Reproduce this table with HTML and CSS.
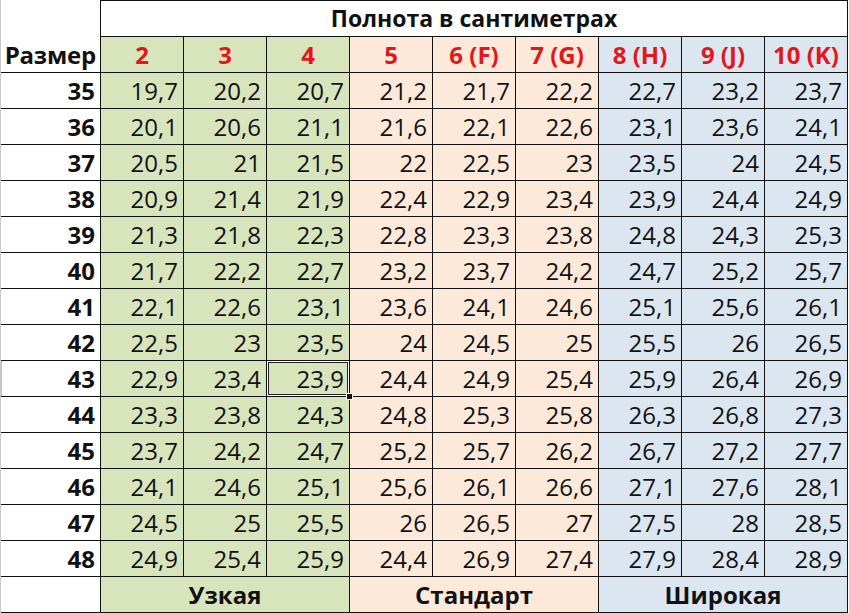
FILE: index.html
```html
<!DOCTYPE html>
<html lang="ru">
<head>
<meta charset="utf-8">
<title>Полнота в сантиметрах</title>
<link rel="stylesheet" href="styles.css">
</head>
<body>
<div class="sheet">
  <div class="c lbl corner">Размер</div>
  <div class="c title">Полнота в сантиметрах</div>

  <div class="c h g">2</div><div class="c h g">3</div><div class="c h g">4</div>
  <div class="c h p">5</div><div class="c h p">6 (F)</div><div class="c h p">7 (G)</div>
  <div class="c h b">8 (H)</div><div class="c h b">9 (J)</div><div class="c h b">10 (K)</div>

  <div class="c lbl">35</div>
  <div class="c n g">19,7</div><div class="c n g">20,2</div><div class="c n g">20,7</div>
  <div class="c n p">21,2</div><div class="c n p">21,7</div><div class="c n p">22,2</div>
  <div class="c n b">22,7</div><div class="c n b">23,2</div><div class="c n b">23,7</div>

  <div class="c lbl">36</div>
  <div class="c n g">20,1</div><div class="c n g">20,6</div><div class="c n g">21,1</div>
  <div class="c n p">21,6</div><div class="c n p">22,1</div><div class="c n p">22,6</div>
  <div class="c n b">23,1</div><div class="c n b">23,6</div><div class="c n b">24,1</div>

  <div class="c lbl">37</div>
  <div class="c n g">20,5</div><div class="c n g">21</div><div class="c n g">21,5</div>
  <div class="c n p">22</div><div class="c n p">22,5</div><div class="c n p">23</div>
  <div class="c n b">23,5</div><div class="c n b">24</div><div class="c n b">24,5</div>

  <div class="c lbl">38</div>
  <div class="c n g">20,9</div><div class="c n g">21,4</div><div class="c n g">21,9</div>
  <div class="c n p">22,4</div><div class="c n p">22,9</div><div class="c n p">23,4</div>
  <div class="c n b">23,9</div><div class="c n b">24,4</div><div class="c n b">24,9</div>

  <div class="c lbl">39</div>
  <div class="c n g">21,3</div><div class="c n g">21,8</div><div class="c n g">22,3</div>
  <div class="c n p">22,8</div><div class="c n p">23,3</div><div class="c n p">23,8</div>
  <div class="c n b">24,8</div><div class="c n b">24,3</div><div class="c n b">25,3</div>

  <div class="c lbl">40</div>
  <div class="c n g">21,7</div><div class="c n g">22,2</div><div class="c n g">22,7</div>
  <div class="c n p">23,2</div><div class="c n p">23,7</div><div class="c n p">24,2</div>
  <div class="c n b">24,7</div><div class="c n b">25,2</div><div class="c n b">25,7</div>

  <div class="c lbl">41</div>
  <div class="c n g">22,1</div><div class="c n g">22,6</div><div class="c n g">23,1</div>
  <div class="c n p">23,6</div><div class="c n p">24,1</div><div class="c n p">24,6</div>
  <div class="c n b">25,1</div><div class="c n b">25,6</div><div class="c n b">26,1</div>

  <div class="c lbl">42</div>
  <div class="c n g">22,5</div><div class="c n g">23</div><div class="c n g">23,5</div>
  <div class="c n p">24</div><div class="c n p">24,5</div><div class="c n p">25</div>
  <div class="c n b">25,5</div><div class="c n b">26</div><div class="c n b">26,5</div>

  <div class="c lbl rowsel">43</div>
  <div class="c n g">22,9</div><div class="c n g">23,4</div><div class="c n g sel">23,9</div>
  <div class="c n p">24,4</div><div class="c n p">24,9</div><div class="c n p">25,4</div>
  <div class="c n b">25,9</div><div class="c n b">26,4</div><div class="c n b">26,9</div>

  <div class="c lbl">44</div>
  <div class="c n g">23,3</div><div class="c n g">23,8</div><div class="c n g">24,3</div>
  <div class="c n p">24,8</div><div class="c n p">25,3</div><div class="c n p">25,8</div>
  <div class="c n b">26,3</div><div class="c n b">26,8</div><div class="c n b">27,3</div>

  <div class="c lbl">45</div>
  <div class="c n g">23,7</div><div class="c n g">24,2</div><div class="c n g">24,7</div>
  <div class="c n p">25,2</div><div class="c n p">25,7</div><div class="c n p">26,2</div>
  <div class="c n b">26,7</div><div class="c n b">27,2</div><div class="c n b">27,7</div>

  <div class="c lbl">46</div>
  <div class="c n g">24,1</div><div class="c n g">24,6</div><div class="c n g">25,1</div>
  <div class="c n p">25,6</div><div class="c n p">26,1</div><div class="c n p">26,6</div>
  <div class="c n b">27,1</div><div class="c n b">27,6</div><div class="c n b">28,1</div>

  <div class="c lbl">47</div>
  <div class="c n g">24,5</div><div class="c n g">25</div><div class="c n g">25,5</div>
  <div class="c n p">26</div><div class="c n p">26,5</div><div class="c n p">27</div>
  <div class="c n b">27,5</div><div class="c n b">28</div><div class="c n b">28,5</div>

  <div class="c lbl">48</div>
  <div class="c n g">24,9</div><div class="c n g">25,4</div><div class="c n g">25,9</div>
  <div class="c n p">24,4</div><div class="c n p">26,9</div><div class="c n p">27,4</div>
  <div class="c n b">27,9</div><div class="c n b">28,4</div><div class="c n b">28,9</div>

  <div class="c lbl"></div>
  <div class="c foot g">Узкая</div>
  <div class="c foot p">Стандарт</div>
  <div class="c foot b">Широкая</div>
</div>
</body>
</html>
```

FILE: styles.css
```css
html, body {
  margin: 0;
  padding: 0;
  background: #ffffff;
}

.sheet {
  display: grid;
  grid-template-columns: 100px repeat(9, 83px);
  grid-template-rows: 37px repeat(16, 36px);
  width: fit-content;
  border-left: 1px solid #c8c8c8;
  border-right: 1px solid #d6d6d6;
  padding-right: 1px;
  font-family: "Open Sans", "Noto Sans", sans-serif;
  font-size: 24px;
  color: #111;
}

.c {
  box-sizing: border-box;
  border-right: 1px solid #111;
  border-bottom: 1px solid #111;
  line-height: 35px;
  white-space: nowrap;
  overflow: hidden;
}

.lbl {
  font-weight: 700;
  text-align: right;
  padding-right: 5px;
  background: #fff;
}

.corner {
  grid-row: 1 / span 2;
  display: flex;
  align-items: flex-end;
  justify-content: flex-end;
  padding-right: 4px;
  letter-spacing: -0.2px;
}

.rowsel {
  box-shadow: inset 1px 0 0 #f2c04a;
}

.title {
  grid-column: 2 / span 9;
  border-top: 1px solid #111;
  text-align: center;
  font-weight: 700;
  font-size: 23px;
  background: #fff;
}

.h {
  text-align: center;
  font-weight: 700;
  color: #e3161c;
}

.n {
  text-align: right;
  padding-right: 5px;
}

.foot {
  grid-column: span 3;
  text-align: center;
  font-weight: 700;
}

.g { background: #d8e4bc; }
.p { background: #fde9d9; }
.b { background: #dce6f1; }

.sel {
  position: relative;
  overflow: visible;
  box-shadow: inset 0 0 0 1px #fff, inset 0 0 0 2px #222;
}

.sel::after {
  content: "";
  position: absolute;
  right: -4px;
  bottom: -4px;
  width: 5px;
  height: 5px;
  background: #111;
  border: 1px solid #fff;
  z-index: 2;
}
```
